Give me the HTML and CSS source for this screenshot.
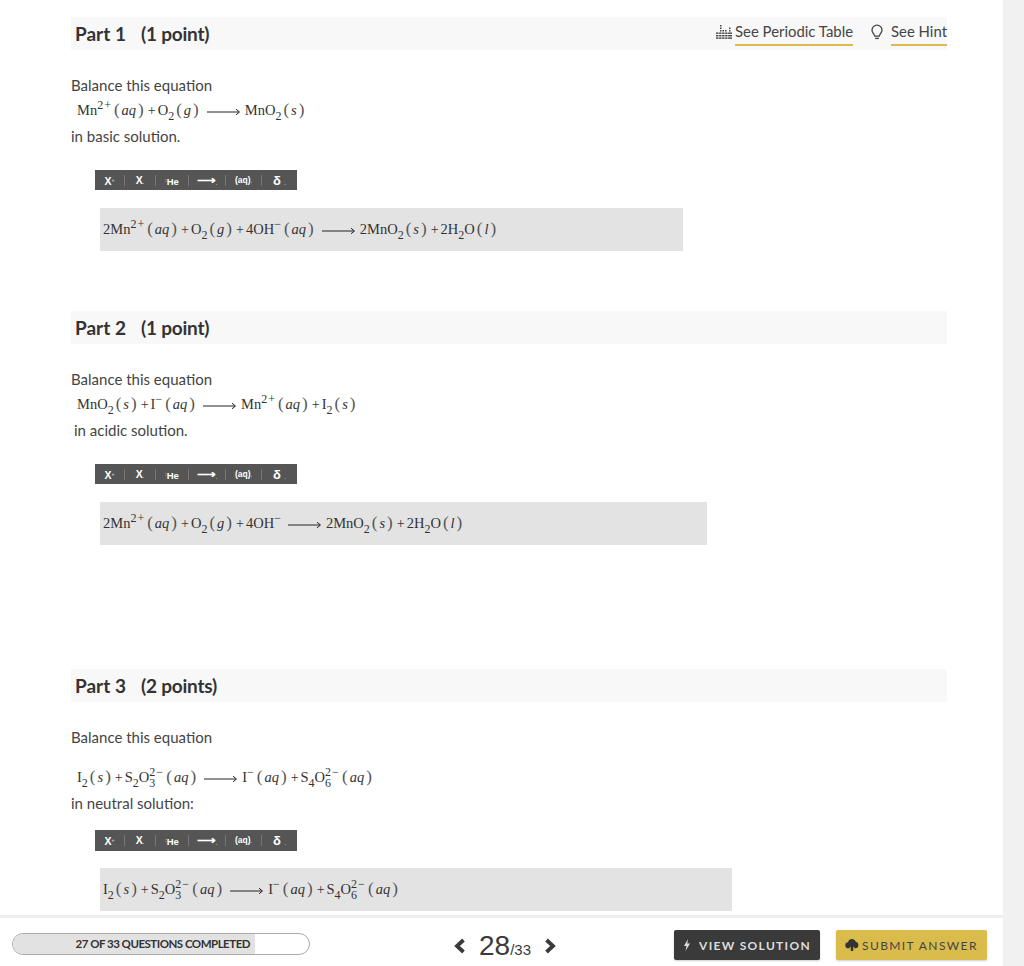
FILE: index.html
```html
<!DOCTYPE html>
<html lang="en">
<head>
<meta charset="utf-8">
<title>Balance equations</title>
<link rel="stylesheet" href="styles.css">
</head>
<body>
<div class="page">
<main class="main">

<section class="part part-1">
  <header class="part-head">
    <h2 class="part-title"><span>Part 1</span><span class="pts">(1 point)</span></h2>
    <div class="tools">
      <a class="tool">
        <svg class="ico-table" viewBox="0 0 16 14" width="16" height="14"><g fill="#444"><rect x="4" y="0" width="1.5" height="1.5"/><rect x="4" y="2.5" width="1.5" height="1.5"/><rect x="4" y="5" width="1.5" height="1.5"/><rect x="0" y="7.5" width="16" height="1.4"/><rect x="0" y="10" width="16" height="1.4"/><rect x="0" y="12.4" width="16" height="1.4"/><rect x="6.5" y="5" width="1.5" height="1.5"/><rect x="9" y="5" width="1.5" height="1.5"/><rect x="13" y="2.5" width="1.5" height="1.5"/><rect x="13" y="5" width="1.5" height="1.5"/></g><g fill="#f8f8f8"><rect x="2.5" y="7" width=".6" height="7"/><rect x="5.5" y="7" width=".6" height="7"/><rect x="8.5" y="7" width=".6" height="7"/><rect x="11.5" y="7" width=".6" height="7"/></g></svg>
        <span class="tool-label">See Periodic Table</span>
      </a>
      <a class="tool">
        <svg class="ico-bulb" viewBox="0 0 14 16" width="14" height="16"><path d="M7 1.2a5 5 0 0 0-5 5c0 2.4 2.2 3.4 2.8 6h4.4c.6-2.600 2.800-3.600 2.800-6a5 5 0 0 0-5-5z" fill="none" stroke="#444" stroke-width="1.3"/><path d="M5.200 14.400h3.600" stroke="#444" stroke-width="1.400"/></svg>
        <span class="tool-label">See Hint</span>
      </a>
    </div>
  </header>
  <p class="prompt">Balance this equation</p>
  <div class="eq eq-question">Mn<sup>2+</sup><span class="p">(</span><i>aq</i><span class="p">)</span><span class="op">+</span>O<sub>2</sub><span class="p">(</span><i>g</i><span class="p">)</span><svg class="arrow" viewBox="0 0 34 8" width="34" height="8"><path d="M0 4h32M29 1.200l3.500 2.800-3.500 2.800" fill="none" stroke="#222" stroke-width="1"/></svg>MnO<sub>2</sub><span class="p">(</span><i>s</i><span class="p">)</span></div>
  <p class="prompt after">in basic solution.</p>
  <div class="toolbar"><span class="tb tb-1">X<small class="up">+</small></span><span class="tb tb-2">X<small>.</small></span><span class="tb tb-3"><small class="up">:</small>He</span><span class="tb tb-4">&#x27F6;<small>.</small></span><span class="tb tb-5">(aq)<small>.</small></span><span class="tb tb-6">&#948; <small>.</small></span></div>
  <div class="answer answer-1"><div class="eq">2Mn<sup>2+</sup><span class="p">(</span><i>aq</i><span class="p">)</span><span class="op">+</span>O<sub>2</sub><span class="p">(</span><i>g</i><span class="p">)</span><span class="op">+</span>4OH<sup>&#8722;</sup><span class="p">(</span><i>aq</i><span class="p">)</span><svg class="arrow" viewBox="0 0 34 8" width="34" height="8"><path d="M0 4h32M29 1.200l3.500 2.800-3.500 2.800" fill="none" stroke="#222" stroke-width="1"/></svg>2MnO<sub>2</sub><span class="p">(</span><i>s</i><span class="p">)</span><span class="op">+</span>2H<sub>2</sub>O<span class="p">(</span><i>l</i><span class="p">)</span></div></div>
</section>

<section class="part part-2">
  <header class="part-head">
    <h2 class="part-title"><span>Part 2</span><span class="pts">(1 point)</span></h2>
  </header>
  <p class="prompt">Balance this equation</p>
  <div class="eq eq-question">MnO<sub>2</sub><span class="p">(</span><i>s</i><span class="p">)</span><span class="op">+</span>I<sup>&#8722;</sup><span class="p">(</span><i>aq</i><span class="p">)</span><svg class="arrow" viewBox="0 0 34 8" width="34" height="8"><path d="M0 4h32M29 1.200l3.500 2.800-3.500 2.800" fill="none" stroke="#222" stroke-width="1"/></svg>Mn<sup>2+</sup><span class="p">(</span><i>aq</i><span class="p">)</span><span class="op">+</span>I<sub>2</sub><span class="p">(</span><i>s</i><span class="p">)</span></div>
  <p class="prompt after indent">in acidic solution.</p>
  <div class="toolbar"><span class="tb tb-1">X<small class="up">+</small></span><span class="tb tb-2">X<small>.</small></span><span class="tb tb-3"><small class="up">:</small>He</span><span class="tb tb-4">&#x27F6;<small>.</small></span><span class="tb tb-5">(aq)<small>.</small></span><span class="tb tb-6">&#948; <small>.</small></span></div>
  <div class="answer answer-2"><div class="eq">2Mn<sup>2+</sup><span class="p">(</span><i>aq</i><span class="p">)</span><span class="op">+</span>O<sub>2</sub><span class="p">(</span><i>g</i><span class="p">)</span><span class="op">+</span>4OH<sup>&#8722;</sup><svg class="arrow" viewBox="0 0 34 8" width="34" height="8"><path d="M0 4h32M29 1.200l3.500 2.800-3.500 2.800" fill="none" stroke="#222" stroke-width="1"/></svg>2MnO<sub>2</sub><span class="p">(</span><i>s</i><span class="p">)</span><span class="op">+</span>2H<sub>2</sub>O<span class="p">(</span><i>l</i><span class="p">)</span></div></div>
</section>

<section class="part part-3">
  <header class="part-head">
    <h2 class="part-title"><span>Part 3</span><span class="pts">(2 points)</span></h2>
  </header>
  <p class="prompt">Balance this equation</p>
  <div class="eq eq-question eq-gap">I<sub>2</sub><span class="p">(</span><i>s</i><span class="p">)</span><span class="op">+</span>S<sub>2</sub>O<span class="stack"><b>2&#8722;</b><b>3</b></span><span class="p">(</span><i>aq</i><span class="p">)</span><svg class="arrow" viewBox="0 0 34 8" width="34" height="8"><path d="M0 4h32M29 1.200l3.500 2.800-3.500 2.800" fill="none" stroke="#222" stroke-width="1"/></svg>I<sup>&#8722;</sup><span class="p">(</span><i>aq</i><span class="p">)</span><span class="op">+</span>S<sub>4</sub>O<span class="stack"><b>2&#8722;</b><b>6</b></span><span class="p">(</span><i>aq</i><span class="p">)</span></div>
  <p class="prompt after">in neutral solution:</p>
  <div class="toolbar"><span class="tb tb-1">X<small class="up">+</small></span><span class="tb tb-2">X<small>.</small></span><span class="tb tb-3"><small class="up">:</small>He</span><span class="tb tb-4">&#x27F6;<small>.</small></span><span class="tb tb-5">(aq)<small>.</small></span><span class="tb tb-6">&#948; <small>.</small></span></div>
  <div class="answer answer-3"><div class="eq">I<sub>2</sub><span class="p">(</span><i>s</i><span class="p">)</span><span class="op">+</span>S<sub>2</sub>O<span class="stack"><b>2&#8722;</b><b>3</b></span><span class="p">(</span><i>aq</i><span class="p">)</span><svg class="arrow" viewBox="0 0 34 8" width="34" height="8"><path d="M0 4h32M29 1.200l3.500 2.800-3.500 2.800" fill="none" stroke="#222" stroke-width="1"/></svg>I<sup>&#8722;</sup><span class="p">(</span><i>aq</i><span class="p">)</span><span class="op">+</span>S<sub>4</sub>O<span class="stack"><b>2&#8722;</b><b>6</b></span><span class="p">(</span><i>aq</i><span class="p">)</span></div></div>
</section>

</main>
<div class="rail"></div>
</div>

<footer class="bottom">
  <div class="progress"><div class="progress-fill">27 OF 33 QUESTIONS COMPLETED</div></div>
  <nav class="pager">
    <svg class="chev" viewBox="0 0 12 16" width="12" height="16"><path d="M9.500 2 3 8l6.500 6" fill="none" stroke="#3a3a3a" stroke-width="3.800"/></svg>
    <span class="count"><span class="cur">28</span><span class="tot">/33</span></span>
    <svg class="chev" viewBox="0 0 12 16" width="12" height="16"><path d="M2.500 2 9 8l-6.500 6" fill="none" stroke="#3a3a3a" stroke-width="3.800"/></svg>
  </nav>
  <div class="actions">
    <button class="btn btn-dark"><svg viewBox="0 0 8 12" width="8" height="12"><path d="M5 0 1 7h2.500L2.500 12 7 4.500H4.300z" fill="#ddd"/></svg>VIEW SOLUTION</button>
    <button class="btn btn-gold"><svg viewBox="0 0 14 12" width="14" height="12"><path d="M3.500 9.300a3 3 0 0 1-.4-6A4 4 0 0 1 10.800 2.800a3.300 3.300 0 0 1-.3 6.500z" fill="#333"/><path d="M5.800 6.500h2.400V12H5.800z" fill="#333"/><path d="M3.800 9.300 5.800 7.500V9.300zM10.200 9.300 8.200 7.500V9.300z" fill="#d9bc4c"/></svg>SUBMIT ANSWER</button>
  </div>
</footer>
</body>
</html>
```
FILE: styles.css
```css
* { box-sizing: border-box; }
html, body { margin: 0; height: 966px; overflow: hidden; background: #fff; }
body { font-family: "Lato", sans-serif; color: #444; font-size: 15px; }
.page { display: flex; height: 966px; }
.main { width: 1003px; padding: 17px 56px 0 71px; }
.rail { width: 21px; background: #f1f1f1; }

.part-head { height: 33px; background: #f8f8f8; display: flex; justify-content: space-between; align-items: center; padding: 0 0 0 4px; }
.part-title { margin: 0; font-size: 19px; font-weight: 700; color: #333; display: flex; gap: 15px; line-height: 33px; }
.pts { letter-spacing: -.2px; }
.tools { display: flex; gap: 17px; margin-top: -3px; }
.tool { display: flex; align-items: center; gap: 3px; height: 28px; }
.tool-label { font-size: 14.900px; line-height: 26px; border-bottom: 2px solid #e0b94e; color: #444; display: block; height: 28px; }
.ico-bulb { margin-right: 4px; }

.prompt { margin: 0; line-height: 24px; height: 24px; font-size: 15px; color: #444; }
.part-head + .prompt { margin-top: 23px; }
.prompt.after { margin-top: 1px; }
.prompt.indent { padding-left: 3px; }

.eq { font-family: "Liberation Serif", serif; font-size: 14.500px; color: #333; white-space: nowrap; line-height: 24px; }
.eq-question { height: 26px; padding: 1px 0 0 6px; }
.eq-gap { margin-top: 15px; }
.eq i { font-style: italic; }
.eq sup, .eq sub { font-size: 12px; line-height: 0; }
.eq sub { vertical-align: -5px; }
.eq sup { vertical-align: 6px; letter-spacing: 1px; }
.eq .p { font-size: 17px; margin: 0 2px; color: #555; }
.eq .op { margin: 0 2px; font-size: 14px; }
.eq .arrow { margin: 0 4px 0 6px; vertical-align: -1px; }
.stack { display: inline-flex; flex-direction: column; vertical-align: 6px; width: 15px; line-height: 11px; font-size: 12px; }
.stack b { font-weight: 400; display: block; height: 11px; letter-spacing: 1px; }

.toolbar { width: 202px; height: 20px; margin: 22px 0 0 24px; background: #555; color: #fff; display: flex; align-items: center; font: 700 10.500px "Liberation Sans", sans-serif; }
.part-3 .toolbar { height: 21px; margin-top: 15px; }
.tb { height: 11px; line-height: 11px; border-right: 1px solid #777; white-space: nowrap; text-align: center; }
.tb:last-child { border-right: 0; }
.tb small { font-size: 5px; color: #ccc; }
.tb .up { vertical-align: 3px; }
.tb-1 { width: 30px; }
.tb-2 { width: 31px; }
.tb-3 { width: 33px; font-size: 9.500px; }
.tb-4 { width: 37px; font-size: 13px; }
.tb-5 { width: 36px; font-size: 8.500px; }
.tb-6 { width: 35px; font-size: 13px; }

.answer { height: 43px; margin: 18px 0 0 29px; background: #e3e3e3; display: flex; align-items: center; padding-left: 3px; }
.part-3 .answer { margin-top: 17px; }
.answer-1 { width: 583px; }
.answer-2 { width: 607px; }
.answer-3 { width: 632px; }

.part-2 { margin-top: 60px; }
.part-3 { margin-top: 124px; }

.bottom { position: fixed; left: 0; right: 21px; bottom: 0; height: 51px; background: #fff; border-top: 3px solid #eee; display: flex; align-items: center; padding: 0 16px 0 12px; }
.progress { width: 298px; height: 22px; border: 1px solid #aaa; border-radius: 11px; overflow: hidden; margin-top: 4px; }
.progress-fill { width: 242px; height: 100%; background: #e2e2e2; font-size: 11.500px; font-weight: 700; color: #333; letter-spacing: -.5px; line-height: 20px; text-align: right; padding-right: 5px; white-space: nowrap; }
.pager { display: flex; align-items: center; margin: 8px 0 0 144px; gap: 13px; }
.count { color: #3a3a3a; font-family: "Liberation Sans", sans-serif; }
.cur { font-size: 28px; line-height: 32px; }
.tot { font-size: 15px; }
.actions { display: flex; gap: 16px; margin: 6px 0 0 auto; }
.btn { height: 30px; border: 0; border-radius: 2px; display: flex; align-items: center; font: 700 12px "Lato", sans-serif; padding: 0 0 0 9px; white-space: nowrap; box-shadow: 0 1px 2px rgba(0,0,0,.2); }
.btn svg { flex: 0 0 auto; }
.btn-dark { width: 146px; background: #3a3a3a; color: #ddd; letter-spacing: 1.300px; gap: 8px; }
.btn-gold { width: 151px; background: #d9bc4c; color: #444; font-weight: 400; letter-spacing: 1.400px; gap: 3px; }
```
